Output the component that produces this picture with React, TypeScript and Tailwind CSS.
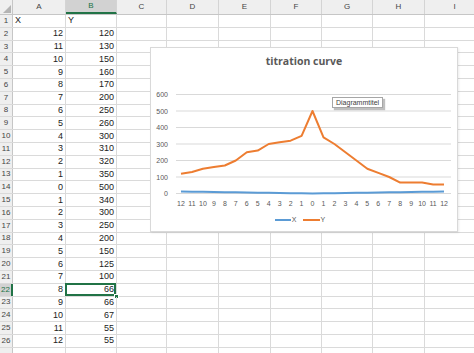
import React from 'react';

const COLS = [
  { name: 'A', w: 53 },
  { name: 'B', w: 51 },
  { name: 'C', w: 50 },
  { name: 'D', w: 52 },
  { name: 'E', w: 52 },
  { name: 'F', w: 51 },
  { name: 'G', w: 51 },
  { name: 'H', w: 52 },
  { name: 'I', w: 60 },
];

const X_VALS = [12, 11, 10, 9, 8, 7, 6, 5, 4, 3, 2, 1, 0, 1, 2, 3, 4, 5, 6, 7, 8, 9, 10, 11, 12];
const Y_VALS = [120, 130, 150, 160, 170, 200, 250, 260, 300, 310, 320, 350, 500, 340, 300, 250, 200, 150, 125, 100, 66, 66, 67, 55, 55];

const ROW_H = 12.8;

// plot area svg starts 26px below chart top
const Chart: React.FC = () => {
  const x0 = 30;
  const step = 10.96;
  const zeroY = 119.5;
  const unit = 16.5 / 100;
  const px = (i: number) => x0 + i * step;
  const py = (v: number) => zeroY - v * unit;
  const line = (vals: number[]) => vals.map((v, i) => `${i === 0 ? 'M' : 'L'}${px(i).toFixed(1)} ${py(v).toFixed(1)}`).join(' ');
  const font = 'Liberation Sans, sans-serif';

  return (
    <div className="absolute left-[150px] top-[47px] w-[308px] h-[185px] flex flex-col bg-white border border-[#d9d9d9] shadow-[1px_1px_2px_rgba(0,0,0,0.08)]">
      <div className="h-[26px] pt-[7px] text-center text-[10.5px] leading-[12px] font-bold text-[#595959] font-['Open_Sans',sans-serif]">
        titration curve
      </div>
      <svg width={306} height={140} className="shrink-0">
        {[0, 100, 200, 300, 400, 500, 600].map((v) => (
          <g key={v}>
            <line x1={25} x2={300} y1={py(v)} y2={py(v)} stroke="#d9d9d9" strokeWidth={1} />
            <text x={17} y={py(v) + 2.5} textAnchor="end" fontSize={7} fill="#595959" fontFamily={font}>{v}</text>
          </g>
        ))}
        {X_VALS.map((v, i) => (
          <text key={i} x={px(i)} y={132} textAnchor="middle" fontSize={7} fill="#595959" fontFamily={font}>{v}</text>
        ))}
        <path d={line(X_VALS)} fill="none" stroke="#5b9bd5" strokeWidth={2} strokeLinejoin="round" />
        <path d={line(Y_VALS)} fill="none" stroke="#ed7d31" strokeWidth={2} strokeLinejoin="round" />
      </svg>
      <div className="flex justify-center items-center gap-[6px] mt-[2px] pr-[8px] text-[7px] leading-none text-[#595959]">
        <div className="flex items-center gap-[1px]">
          <span className="w-[16px] h-[2px] bg-[#5b9bd5]" />
          <span>X</span>
        </div>
        <div className="flex items-center gap-[1px]">
          <span className="w-[17px] h-[2px] bg-[#ed7d31]" />
          <span>Y</span>
        </div>
      </div>
      <div className="absolute left-[181px] top-[49px] h-[11px] px-[3px] flex items-center bg-white border border-[#a6a6a6] shadow-[2px_2px_1px_rgba(0,0,0,0.25)] text-[7px] leading-none text-[#404040] font-['Liberation_Sans',sans-serif]">
        Diagrammtitel
      </div>
    </div>
  );
};

const App: React.FC = () => {
  const rows = Array.from({ length: 27 }, (_, i) => i + 1);

  const cell = (r: number, c: number) => {
    if (r === 1) return c === 0 ? 'X' : c === 1 ? 'Y' : '';
    if (r >= 2 && r <= 26) {
      if (c === 0) return String(X_VALS[r - 2]);
      if (c === 1) return String(Y_VALS[r - 2]);
    }
    return '';
  };

  return (
    <div className="relative w-[474px] h-[353px] overflow-hidden bg-white font-['Liberation_Sans',sans-serif] text-[9px] text-[#222]">
      {/* column headers */}
      <div className="flex h-[15px] bg-[#efefef] border-b border-[#c6c6c6]">
        <div className="relative w-[13px] shrink-0 border-r border-[#c6c6c6]">
          <div className="absolute right-[1px] bottom-[1px] w-0 h-0 border-l-[8px] border-l-transparent border-b-[8px] border-b-[#b4b4b4]" />
        </div>
        {COLS.map((col) => (
          <div
            key={col.name}
            style={{ width: col.w }}
            className={`shrink-0 flex items-center justify-center border-r border-[#d4d4d4] text-[8px] ${
              col.name === 'B' ? 'bg-[#d2d2d2] text-[#217346] border-b-2 border-b-[#217346]' : 'text-[#444]'
            }`}
          >
            {col.name}
          </div>
        ))}
      </div>

      {/* rows */}
      {rows.map((r) => (
        <div key={r} className="flex border-b border-[#dadada]" style={{ height: ROW_H }}>
          <div
            className={`w-[13px] shrink-0 flex items-center justify-center text-[8px] border-r ${
              r === 22 ? 'bg-[#d2d2d2] text-[#217346] border-r-2 border-r-[#217346]' : 'bg-[#efefef] text-[#444] border-[#c6c6c6]'
            }`}
          >
            {r < 27 ? r : ''}
          </div>
          {COLS.map((col, c) => {
            const v = cell(r, c);
            const left = r === 1;
            return (
              <div
                key={col.name}
                style={{ width: col.w }}
                className={`relative shrink-0 flex items-center border-r border-[#dadada] px-[2px] leading-none ${left ? 'justify-start' : 'justify-end'}`}
              >
                {v}
                {r === 22 && c === 1 && (
                  <>
                    <div className="absolute -left-[1px] -top-[1px] right-0 bottom-0 border-2 border-[#217346]" />
                    <div className="absolute -right-[3px] -bottom-[3px] w-[5px] h-[5px] bg-[#217346] border border-white" />
                  </>
                )}
              </div>
            );
          })}
        </div>
      ))}

      <Chart />
    </div>
  );
};

export default App;
